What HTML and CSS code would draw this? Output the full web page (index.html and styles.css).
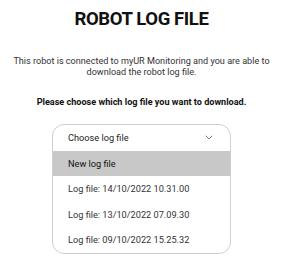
FILE: index.html
```html
<!DOCTYPE html>
<html>
<head>
<meta charset="utf-8">
<link rel="stylesheet" href="styles.css">
</head>
<body>
<div class="page">
  <h1 class="title">ROBOT LOG FILE</h1>
  <p class="intro">This robot is connected to myUR Monitoring and you are able to download the robot log file.</p>
  <p class="prompt">Please choose which log file you want to download.</p>
  <div class="select">
    <div class="row head">
      <span>Choose log file</span>
      <svg class="chev" width="8" height="5" viewBox="0 0 8 5"><path d="M0.8 0.8 L4 3.8 L7.2 0.8" fill="none" stroke="#666" stroke-width="0.9"/></svg>
    </div>
    <div class="row active">New log file</div>
    <div class="row">Log file: 14/10/2022 10.31.00</div>
    <div class="row">Log file: 13/10/2022 07.09.30</div>
    <div class="row">Log file: 09/10/2022 15.25.32</div>
  </div>
</div>
</body>
</html>
```
FILE: styles.css
```css
html, body {
  margin: 0;
  padding: 0;
  background: #fff;
}
.page {
  width: 283px;
  font-family: Roboto, "Liberation Sans", sans-serif;
  display: flex;
  flex-direction: column;
  align-items: center;
}
.title {
  margin: 8px 0 0 0;
  font-size: 18.5px;
  line-height: 22px;
  font-weight: 700;
  color: #111;
  letter-spacing: -0.4px;
}
.intro {
  margin: 26px 8px 0 8px;
  font-size: 9.1px;
  line-height: 11px;
  color: #333;
  text-align: center;
}
.prompt {
  margin: 18px 0 0 0;
  font-size: 9.1px;
  line-height: 12px;
  font-weight: 700;
  color: #111;
  text-align: center;
}
.select {
  margin-top: 16px;
  width: 177px;
  border: 1px solid #cfcfcf;
  border-radius: 12px;
  overflow: hidden;
  display: flex;
  flex-direction: column;
}
.row {
  height: 25.5px;
  display: flex;
  align-items: center;
  padding: 0 15px;
  font-size: 9.2px;
  color: #333;
}
.head {
  justify-content: space-between;
  color: #222;
}
.chev {
  margin-right: 2px;
}
.active {
  background: #c8c8c8;
  color: #111;
}
```
